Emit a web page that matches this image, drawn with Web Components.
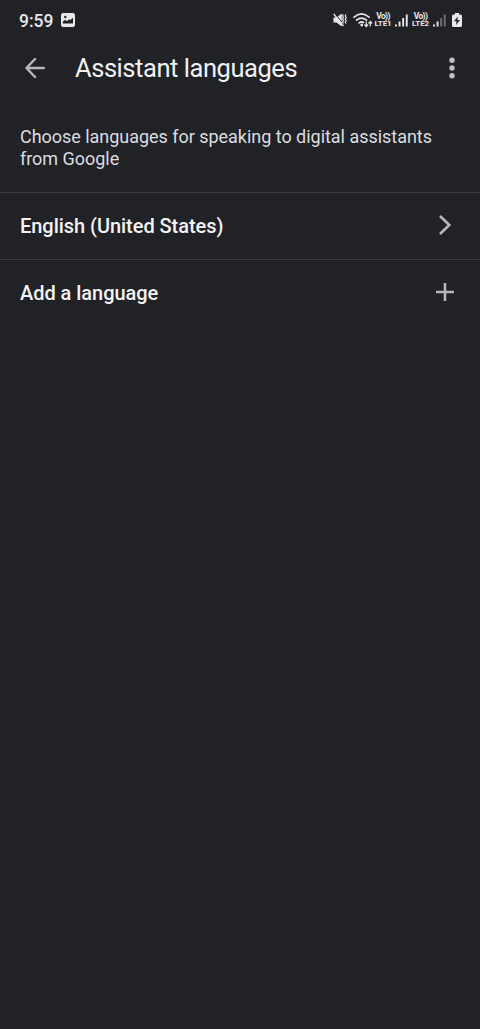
<!DOCTYPE html>
<html lang="en">
<head>
<meta charset="utf-8">
<title>Assistant languages</title>
<style>
html,body{margin:0;height:100%;background:#212226}
</style>
</head>
<body>
<language-settings></language-settings>
<script>
const define = (name, html) => customElements.define(name, class extends HTMLElement {
  constructor() {
    super();
    this.attachShadow({ mode: 'open' }).innerHTML = html;
  }
});

define('volte-label', `
<style>
:host{display:flex;flex-direction:column;align-items:center;width:18px;color:#e8e8eb;font-family:Roboto,sans-serif;font-weight:700}
span{display:block;white-space:nowrap}
.v{letter-spacing:-.6px;font-size:8.500px;line-height:8px}
.l{letter-spacing:-.1px;font-size:8px;line-height:8px}
</style>
<span class="v">Vo))</span><span class="l"><slot></slot></span>`);

define('status-bar', `
<style>
:host{display:flex;align-items:center;height:40px;padding:0 18.500px 0 19px;box-sizing:border-box;color:#e8e8eb;font:500 17.500px/20px Roboto,sans-serif}
.time{letter-spacing:0;width:41.500px;padding-top:1px;white-space:nowrap}
.icons{margin-left:auto;display:flex;align-items:center}
svg{display:block;flex:none}
</style>
<span class="time">9:59</span>
<svg width="14" height="14" viewBox="0 0 14 14"><rect width="14" height="14" rx="2.2" fill="#e8e8eb"/><path d="M1.800 10.500V8.800l2.300-2 2 1.500 2-2 1.200.8 2.700-2.300v5.700z" fill="#212226"/><circle cx="4.300" cy="4" r="1.200" fill="#212226"/></svg>
<div class="icons">
<svg width="14" height="16" viewBox="0 0 14 16"><path d="M.5 5.500h3L8.800 1.500v13L3.500 10.500H.5z" fill="#e8e8eb"/><path d="M1.500 1.200L11 12.700" stroke="#212226" stroke-width="1"/><path d="M.7 2L10.500 14" stroke="#e8e8eb" stroke-width="1.300"/><path d="M10.300 2.500l-.8 1.500 1 1.500-1 1.500 1 1.500-1 1.500 1 1.500M13 2.500l-.8 1.500 1 1.500-1 1.500 1 1.500-1 1.500 1 1.500" fill="none" stroke="#e8e8eb" stroke-width="1.200"/></svg>
<svg width="20" height="16" viewBox="0 0 20 16" style="margin-left:6px"><g fill="none" stroke="#e8e8eb" stroke-width="1.600" stroke-linecap="round"><path d="M1 5.200Q8.500-1.500 16 5.200M3.500 8.200Q8.500 4 13.500 8.200M6 11Q8.500 9 10.500 10.500"/></g><circle cx="8.700" cy="13" r="1.400" fill="#e8e8eb"/><path d="M13.300 9.500v5M11.500 12.500l1.800 2 1.800-2M17.300 14.500v-5M15.500 11.500l1.800-2 1.800 2" fill="none" stroke="#e8e8eb" stroke-width="1.200"/></svg>
<volte-label style="margin-left:1px">LTE1</volte-label>
<svg width="13" height="13" viewBox="0 0 13 13" style="margin-left:3px" fill="#e8e8eb"><path d="M0 10.500h1.900v2H0zM3.600 7.500h1.900v5H3.600zM7.200 4h1.900v8.500H7.200zM10.800 .5h1.900v12h-1.900z"/></svg>
<volte-label style="margin-left:3.500px">LTE2</volte-label>
<svg width="13" height="13" viewBox="0 0 13 13" style="margin-left:3px" fill="#e8e8eb"><path d="M0 10.500h1.900v2H0zM3.600 7.500h1.900v5H3.600z"/><path opacity=".4" d="M7.200 4h1.900v8.500H7.200zM10.800 .5h1.900v12h-1.900z"/></svg>
<svg width="10" height="14" viewBox="0 0 10 14" style="margin-left:6px"><path d="M3 0h4v1.500h1.500A1.500 1.500 0 0 1 10 3v9.500A1.500 1.500 0 0 1 8.500 14h-7A1.500 1.500 0 0 1 0 12.500V3a1.500 1.500 0 0 1 1.500-1.500H3z" fill="#e8e8eb"/><path d="M5.800 3.500L2 8.300h2.500L4 12l4-5H5.400z" fill="#212226"/></svg>
</div>`);

define('app-bar', `
<style>
:host{display:flex;align-items:center;height:56px;padding:0 25px;box-sizing:border-box;color:#f1f2f4;font:400 25.500px/32px Roboto,sans-serif}
h1{margin:0 0 0 29px;font:inherit;white-space:nowrap;letter-spacing:-.45px}
svg{display:block}
.more{margin-left:auto}
</style>
<svg width="21" height="22" viewBox="0 0 21 22" fill="none" stroke="#b6b7ba" stroke-width="2.500" stroke-linecap="round" stroke-linejoin="round"><path d="M18.800 11H2M10 2L1.500 11l8.500 9"/></svg>
<h1><slot></slot></h1>
<svg class="more" width="6" height="22" viewBox="0 0 6 22" fill="#c0c1c4"><circle cx="3" cy="3.300" r="2.700"/><circle cx="3" cy="11" r="2.700"/><circle cx="3" cy="18.700" r="2.700"/></svg>`);

define('page-intro', `
<style>
:host{display:block;box-sizing:border-box;height:96px;padding:30px 20px 0;color:#dcdde0;font:400 18px/22px Roboto,sans-serif;letter-spacing:-.03px;white-space:nowrap}
</style>
<slot></slot>`);

define('setting-row', `
<style>
:host{display:flex;align-items:center;justify-content:space-between;height:67px;box-sizing:border-box;padding:0 25px 0 20px;border-top:1px solid #3d3e42;color:#f3f3f5;font:500 20px/24px Roboto,sans-serif}
.label{white-space:nowrap;letter-spacing:-.04px}
.icon{padding-bottom:2px}
</style>
<span class="label"><slot></slot></span><div class="icon"><slot name="icon"></slot></div>`);

define('language-settings', `
<style>
:host{display:block;min-height:1029px;background:#212226}
svg{display:block}
</style>
<status-bar></status-bar>
<app-bar>Assistant languages</app-bar>
<page-intro>Choose languages for speaking to digital assistants<br>from Google</page-intro>
<setting-row>English (United States)<svg slot="icon" width="20" height="20" viewBox="0 0 20 20" fill="none" stroke="#b6b7ba" stroke-width="2.600"><path d="M5 1l9.300 9L5 19"/></svg></setting-row>
<setting-row>Add a language<svg slot="icon" width="20" height="20" viewBox="0 0 20 20" fill="none" stroke="#b6b7ba" stroke-width="2.600"><path d="M1 10h18M10 1v18"/></svg></setting-row>`);
</script>
</body>
</html>
